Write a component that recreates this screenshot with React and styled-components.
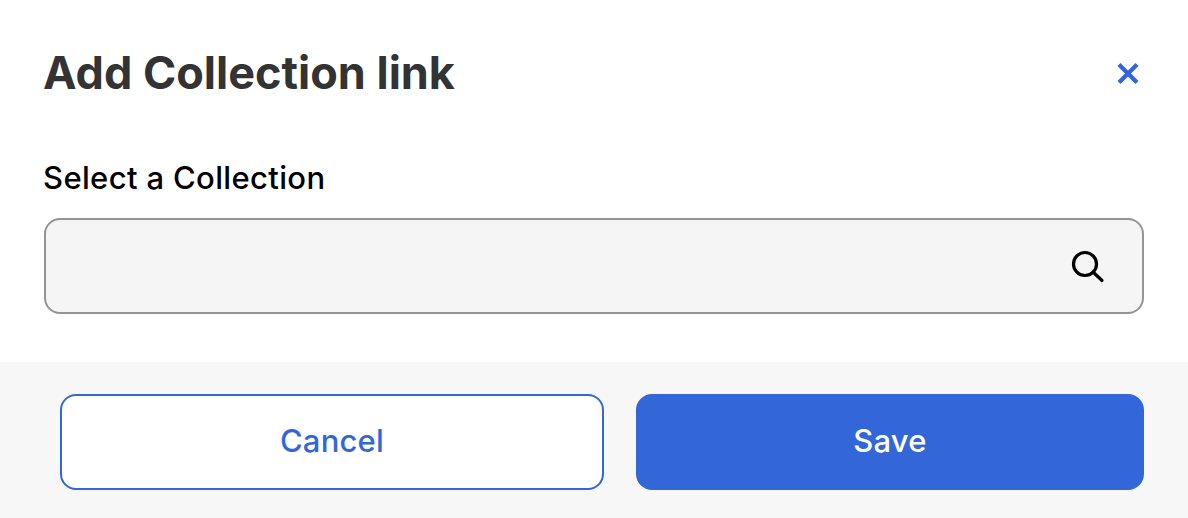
import React from "react";
import styled, { createGlobalStyle } from "styled-components";

const GlobalStyle = createGlobalStyle`
  html, body {
    margin: 0;
    padding: 0;
    background: #fff;
    font-family: "Inter", "Liberation Sans", sans-serif;
  }
  * { box-sizing: border-box; }
`;

const Modal = styled.div`
  width: 1188px;
  height: 518px;
  display: flex;
  flex-direction: column;
  overflow: hidden;
`;

const Header = styled.div`
  height: 146px;
  padding: 0 44px;
  display: flex;
  align-items: center;
  justify-content: space-between;
`;

const Title = styled.h2`
  margin: 0 0 0 -1px;
  font-size: 45px;
  line-height: 56px;
  font-weight: 700;
  color: #333333;
`;

const CloseButton = styled.button`
  width: 32px;
  height: 32px;
  padding: 0;
  border: 0;
  background: none;
  display: flex;
  align-items: center;
  justify-content: center;
  color: #3367d9;
`;

const Body = styled.div`
  flex: 1;
  padding: 12px 44px 0;
`;

const Label = styled.label`
  display: block;
  margin: 0 0 20px -1px;
  font-size: 31px;
  line-height: 40px;
  font-weight: 500;
  letter-spacing: 0.35px;
  color: #000;
`;

const SearchField = styled.div`
  height: 96px;
  border: 2px solid #949494;
  border-radius: 16px;
  background: #f5f5f5;
  display: flex;
  align-items: center;
  justify-content: flex-end;
  padding-right: 37px;
  color: #000;
`;

const SearchInput = styled.input`
  flex: 1;
  min-width: 0;
  height: 100%;
  padding: 0 24px;
  border: 0;
  outline: 0;
  background: transparent;
  font: inherit;
`;

const Footer = styled.div`
  height: 156px;
  background: #f7f7f7;
  padding: 32px 44px 28px 60px;
  display: grid;
  grid-template-columns: 544px 508px;
  gap: 32px;
`;

const Button = styled.button`
  height: 96px;
  padding: 0 0 4px;
  border-radius: 16px;
  border: 2px solid #3367d9;
  background: ${(p) => (p.$primary ? "#3367d9" : "#fff")};
  color: ${(p) => (p.$primary ? "#fff" : "#3367d9")};
  font-family: inherit;
  font-size: 31px;
  font-weight: 500;
  letter-spacing: 0.2px;
`;

export default function App() {
  return (
    <>
      <GlobalStyle />
      <Modal>
        <Header>
          <Title>Add Collection link</Title>
          <CloseButton aria-label="Close">
            <svg width="32" height="32" viewBox="0 0 32 32" fill="none">
              <path
                d="M7 7.5l18 18M25 7.5l-18 18"
                stroke="currentColor"
                strokeWidth="4.4"
                strokeLinecap="butt"
              />
            </svg>
          </CloseButton>
        </Header>
        <Body>
          <Label>Select a Collection</Label>
          <SearchField>
            <SearchInput />
            <svg width="36" height="36" viewBox="0 0 36 36" fill="none">
              <circle cx="16" cy="16" r="11.5" stroke="currentColor" strokeWidth="3.2" />
              <path
                d="M24.5 24.5l8.5 8"
                stroke="currentColor"
                strokeWidth="3.2"
                strokeLinecap="round"
              />
            </svg>
          </SearchField>
        </Body>
        <Footer>
          <Button>Cancel</Button>
          <Button $primary>Save</Button>
        </Footer>
      </Modal>
    </>
  );
}
